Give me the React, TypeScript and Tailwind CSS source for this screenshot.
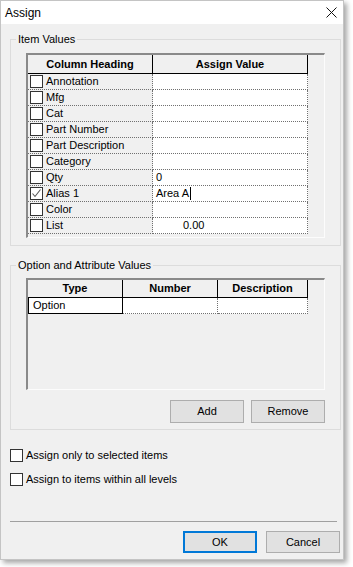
import React from "react";

const rows: { label: string; value?: string; checked?: boolean; caret?: boolean; indent?: boolean }[] = [
  { label: "Annotation" },
  { label: "Mfg" },
  { label: "Cat" },
  { label: "Part Number" },
  { label: "Part Description" },
  { label: "Category" },
  { label: "Qty", value: "0" },
  { label: "Alias 1", value: "Area A", checked: true, caret: true },
  { label: "Color" },
  { label: "List", value: "0.00", indent: true },
];

function CheckBox({ checked }: { checked?: boolean }) {
  return (
    <span className="w-[13px] h-[13px] shrink-0 border border-[#333333] bg-white flex items-center justify-center">
      {checked && (
        <svg width="11" height="11" viewBox="0 0 11 11">
          <path d="M1.5 5.5 L4 8.5 L9.5 1.5" stroke="#5a5a5a" strokeWidth="1.1" fill="none" />
        </svg>
      )}
    </span>
  );
}

function Group({ label, className, children }: { label: string; className: string; children: React.ReactNode }) {
  return (
    <div className={`relative border border-[#dcdcdc] ${className}`}>
      <span className="absolute left-[5px] -top-[8px] px-[2px] bg-[#f0f0f0] leading-[14px]">{label}</span>
      {children}
    </div>
  );
}

function Button({ label, primary }: { label: string; primary?: boolean }) {
  return (
    <div
      className={`h-[22px] w-[74px] bg-[#e1e1e1] flex items-center justify-center ${
        primary ? "border-2 border-[#0078d7]" : "border border-[#adadad]"
      }`}
    >
      {label}
    </div>
  );
}

export default function App() {
  return (
    <div className="w-[353px] h-[567px] bg-white font-['Liberation_Sans',Arial,sans-serif] text-[11px] text-black">
      <div className="w-[344px] h-[560px] border border-[#c4c4c4] bg-[#f0f0f0] flex flex-col shadow-[3px_3px_5px_rgba(0,0,0,0.35)]">
        {/* title bar */}
        <div className="h-[23px] bg-white flex items-center justify-between pl-[4px] pr-[5px]">
          <span className="text-[12px]">Assign</span>
          <svg width="11" height="11" viewBox="0 0 11 11" className="mr-[1px]">
            <path d="M0.5 0.5 L10.5 10.5 M10.5 0.5 L0.5 10.5" stroke="#111" strokeWidth="1" />
          </svg>
        </div>

        {/* item values */}
        <Group label="Item Values" className="ml-[9px] mt-[15px] w-[331px] h-[207px]">
          <div className="ml-[15px] mt-[13px] w-[299px] h-[185px] border-t-2 border-l-2 border-r border-b border-t-[#8a8a8a] border-l-[#8a8a8a] border-r-[#fcfcfc] border-b-[#fcfcfc]">
            <div className="flex h-[19px] font-bold">
              <div className="w-[125px] border-b border-r border-black flex items-center justify-center">Column Heading</div>
              <div className="w-[155px] border-b border-r border-black flex items-center justify-center">Assign Value</div>
            </div>
            {rows.map((r) => (
              <div key={r.label} className="flex h-[16px]">
                <div className="w-[125px] border-b border-r border-dotted border-[#707070] flex items-center pl-[2px] gap-[3px]">
                  <CheckBox checked={r.checked} />
                  <span>{r.label}</span>
                </div>
                <div
                  className={`w-[155px] bg-white border-b border-r border-dotted border-[#707070] flex items-center ${
                    r.indent ? "pl-[30px]" : "pl-[3px]"
                  }`}
                >
                  {r.value}
                  {r.caret && <span className="ml-[1px] w-[1px] h-[13px] bg-black" />}
                </div>
              </div>
            ))}
          </div>
        </Group>

        {/* option and attribute values */}
        <Group label="Option and Attribute Values" className="ml-[9px] mt-[19px] w-[331px] h-[165px]">
          <div className="ml-[15px] mt-[12px] w-[299px] h-[112px] border-t-2 border-l-2 border-r border-b border-t-[#8a8a8a] border-l-[#8a8a8a] border-r-[#fcfcfc] border-b-[#fcfcfc]">
            <div className="flex h-[18px] font-bold">
              <div className="w-[95px] border-b border-r border-black flex items-center justify-center">Type</div>
              <div className="w-[95px] border-b border-r border-black flex items-center justify-center">Number</div>
              <div className="w-[90px] border-b border-r border-black flex items-center justify-center">Description</div>
            </div>
            <div className="flex h-[16px]">
              <div className="w-[95px] bg-white border border-t-0 border-black flex items-center pl-[4px]">Option</div>
              <div className="w-[95px] bg-white border-b border-r border-dotted border-[#707070]" />
              <div className="w-[90px] bg-white border-b border-r border-dotted border-[#707070]" />
            </div>
          </div>
          <div className="flex justify-end gap-[7px] mt-[10px] mr-[15px]">
            <div className="h-[23px] w-[74px] bg-[#e1e1e1] border border-[#adadad] flex items-center justify-center">Add</div>
            <div className="h-[23px] w-[74px] bg-[#e1e1e1] border border-[#adadad] flex items-center justify-center">Remove</div>
          </div>
        </Group>

        {/* options */}
        <div className="ml-[9px] mt-[19px] flex items-center gap-[3px] h-[13px]">
          <CheckBox />
          <span>Assign only to selected items</span>
        </div>
        <div className="ml-[9px] mt-[11px] flex items-center gap-[3px] h-[13px]">
          <CheckBox />
          <span>Assign to items within all levels</span>
        </div>

        <div className="ml-[9px] mt-[35px] w-[327px] h-[1px] bg-[#a0a0a0]" />

        <div className="flex justify-end gap-[9px] mt-[9px] mr-[3px]">
          <Button label="OK" primary />
          <Button label="Cancel" />
        </div>
      </div>
    </div>
  );
}
